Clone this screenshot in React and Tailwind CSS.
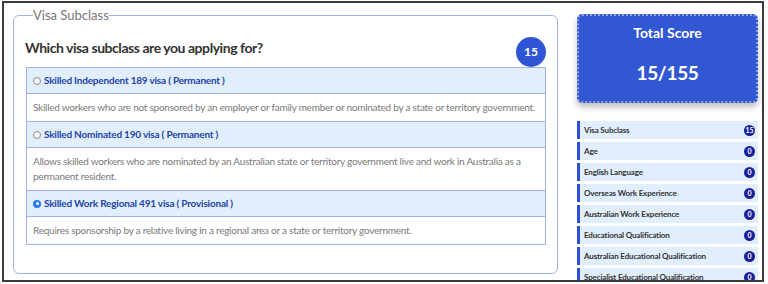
import React from 'react';

const visaOptions = [
  {
    id: '189',
    label: 'Skilled Independent 189 visa ( Permanent )',
    desc: 'Skilled workers who are not sponsored by an employer or family member or nominated by a state or territory government.',
    checked: false,
  },
  {
    id: '190',
    label: 'Skilled Nominated 190 visa ( Permanent )',
    desc: 'Allows skilled workers who are nominated by an Australian state or territory government live and work in Australia as a permanent resident.',
    checked: false,
  },
  {
    id: '491',
    label: 'Skilled Work Regional 491 visa ( Provisional )',
    desc: 'Requires sponsorship by a relative living in a regional area or a state or territory government.',
    checked: true,
  },
];

const scoreItems = [
  { name: 'Visa Subclass', score: 15 },
  { name: 'Age', score: 0 },
  { name: 'English Language', score: 0 },
  { name: 'Overseas Work Experience', score: 0 },
  { name: 'Australian Work Experience', score: 0 },
  { name: 'Educational Qualification', score: 0 },
  { name: 'Australian Educational Qualification', score: 0 },
  { name: 'Specialist Educational Qualification', score: 0 },
];

function Radio({ checked }) {
  if (checked) {
    return (
      <span className="w-[8px] h-[8px] rounded-full bg-[#2b7be9] flex items-center justify-center shrink-0">
        <span className="w-[3px] h-[3px] rounded-full bg-white" />
      </span>
    );
  }
  return <span className="w-[8px] h-[8px] rounded-full border border-[#8a8a8a] bg-white shrink-0" />;
}

export default function App() {
  return (
    <div className="w-[768px] h-[284px] bg-white pt-[1px] pl-[2px]" style={{ fontFamily: 'Lato, "Noto Sans", sans-serif' }}>
      <div className="w-[762px] h-[281px] border-2 border-[#3a3a3a] overflow-hidden flex">
        {/* left: form */}
        <fieldset className="ml-[9px] mt-[4px] w-[545px] h-[267px] border border-[#a3b2ea] rounded-[6px] px-[12px] pr-[11px]">
          <legend className="ml-[7px] px-0 text-[13px] leading-[16px] text-[#777]">Visa Subclass</legend>
          <div className="flex items-end justify-between mt-[14px]">
            <h2 className="text-[14px] tracking-[-0.45px] font-bold text-[#333] leading-[20px] mb-[9px] ml-[-1px]">
              Which visa subclass are you applying for?
            </h2>
            <div className="w-[30px] h-[30px] rounded-full bg-[#2f55d4] text-white text-[12px] font-bold flex items-center justify-center">
              15
            </div>
          </div>
          <div className="border border-[#a3b2ea] border-b-0">
            {visaOptions.map((opt) => (
              <div key={opt.id}>
                <div className="h-[26px] bg-[#e1eefd] border-b border-[#a3b2ea] flex items-center gap-[3px] px-[6px]">
                  <Radio checked={opt.checked} />
                  <span className="text-[10px] tracking-[-0.2px] font-bold text-[#2444a6]">{opt.label}</span>
                </div>
                <div className="py-[6px] pl-[6px] pr-[4px] text-[10px] tracking-[-0.25px] leading-[15px] text-[#7a7a7a] border-b border-[#a3b2ea]">
                  {opt.desc}
                </div>
              </div>
            ))}
          </div>
        </fieldset>

        {/* right: score */}
        <div className="ml-[19px] w-[181px] pt-[11px]">
          <div className="h-[89px] bg-[#3257d2] border-2 border-dotted border-[#8ea2e6] rounded-[5px] shadow-[0_4px_6px_rgba(0,0,0,0.25)] flex flex-col items-center text-white font-bold">
            <div className="mt-[8px] text-[14px] leading-[18px]">Total Score</div>
            <div className="mt-[18px] text-[19px] tracking-[-0.3px] leading-[26px]">15/155</div>
          </div>
          <div className="mt-[18px] flex flex-col gap-[3px]">
            {scoreItems.map((item) => (
              <div
                key={item.name}
                className="h-[18px] shrink-0 bg-[#e1eefd] border-l-[3px] border-[#2d4fd4] flex items-center justify-between pl-[4px] pr-[3px]"
              >
                <span className="text-[8px] tracking-[-0.15px] font-bold text-[#333]">{item.name}</span>
                <span className="w-[11px] h-[11px] rounded-full bg-[#1b1f9c] text-white text-[7px] font-bold flex items-center justify-center leading-none">
                  {item.score}
                </span>
              </div>
            ))}
          </div>
        </div>
      </div>
    </div>
  );
}
